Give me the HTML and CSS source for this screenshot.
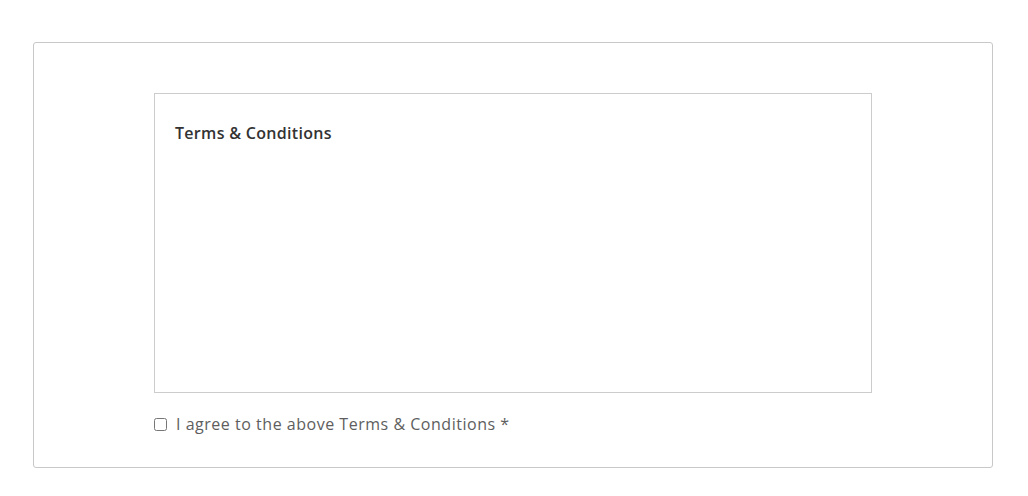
FILE: index.html
```html
<!DOCTYPE html>
<html>
<head>
<meta charset="utf-8">
<link rel="stylesheet" href="styles.css">
</head>
<body>
<div class="page">
  <div class="card">
    <div class="terms">
      <h3 class="terms-title">Terms &amp; Conditions</h3>
    </div>
    <label class="agree">
      <input type="checkbox" class="agree-box">
      <span class="agree-text">I agree to the above Terms &amp; Conditions *</span>
    </label>
  </div>
</div>
</body>
</html>
```
FILE: styles.css
```css
html, body {
  margin: 0;
  padding: 0;
  background: #fff;
}
.page {
  padding: 42px 0 0 33px;
}
.card {
  box-sizing: border-box;
  width: 960px;
  height: 426px;
  border: 1px solid #c8c8c8;
  border-radius: 3px;
  padding: 50px 120px 0 120px;
  font-family: "Open Sans", sans-serif;
}
.terms {
  box-sizing: border-box;
  height: 300px;
  border: 1px solid #cccccc;
  padding: 19px 20px;
}
.terms-title {
  margin: 0;
  font-size: 16px;
  font-weight: 600;
  line-height: 40px;
  color: #333;
  letter-spacing: 0.3px;
}
.agree {
  display: flex;
  align-items: center;
  margin-top: 18px;
  height: 26px;
}
.agree-box {
  margin: 0 9px 0 0;
  width: 13px;
  height: 13px;
}
.agree-text {
  font-size: 16px;
  color: #5e5e5e;
  letter-spacing: 0.52px;
}
```
